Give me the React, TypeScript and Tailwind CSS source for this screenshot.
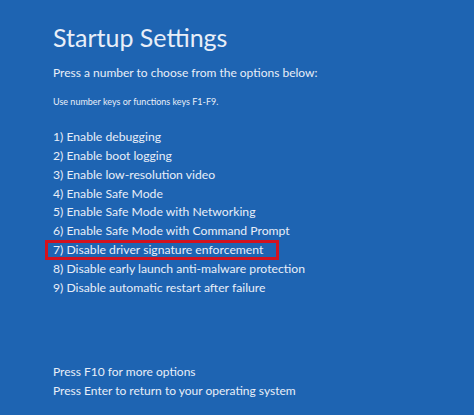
import React from "react";

const items = [
  "1) Enable debugging",
  "2) Enable boot logging",
  "3) Enable low-resolution video",
  "4) Enable Safe Mode",
  "5) Enable Safe Mode with Networking",
  "6) Enable Safe Mode with Command Prompt",
  "7) Disable driver signature enforcement",
  "8) Disable early launch anti-malware protection",
  "9) Disable automatic restart after failure",
];

export default function App() {
  return (
    <div
      className="w-[474px] h-[415px] bg-[#1e64b2] text-[#e8eef8] flex flex-col pl-[53px] pt-[21.5px] pb-[15.5px] overflow-hidden"
      style={{ fontFamily: 'Lato, "Open Sans", sans-serif' }}
    >
      <h1 className="text-[25px] leading-[30px] font-normal">Startup Settings</h1>
      <p className="mt-[13.7px] text-[12px] leading-[16px]">
        Press a number to choose from the options below:
      </p>
      <p className="mt-[15.3px] text-[9px] leading-[12px]">
        Use number keys or functions keys F1-F9.
      </p>
      <ul className="mt-[19.8px] flex flex-col">
        {items.map((t, i) => (
          <li key={t} className="relative text-[12.2px] leading-[18.8px] whitespace-nowrap">
            {i === 6 && (
              <span className="absolute left-[-8.5px] top-[-1.5px] w-[234px] h-[20px] border-[3px] border-[#d3121e]" />
            )}
            <span className="relative">{t}</span>
          </li>
        ))}
      </ul>
      <div className="mt-auto flex flex-col text-[12px] leading-[19px]">
        <p>Press F10 for more options</p>
        <p>Press Enter to return to your operating system</p>
      </div>
    </div>
  );
}
